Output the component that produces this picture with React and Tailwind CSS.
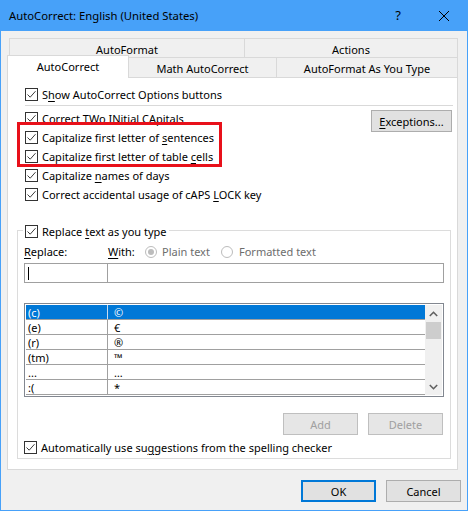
import React from "react";

// little checked box, drawn like the Win10 one
const Check = () => (
    <span className="w-[13px] h-[13px] border border-[#333333] bg-white flex items-center justify-center shrink-0">
        <svg width="11" height="11" viewBox="0 0 11 11">
            <path d="M1.5 5.5 L4.2 8.2 L9.5 2.2" fill="none" stroke="#3c3c3c" strokeWidth="1" />
        </svg>
    </span>
);

const CheckRow = ({ children }) => (
    <div className="flex items-center h-[19px] gap-[4px]">
        <Check />
        <span className="whitespace-nowrap">{children}</span>
    </div>
);

const U = ({ children }) => <span className="underline underline-offset-2">{children}</span>;

const Radio = ({ on }) => (
    <span className="w-[12px] h-[12px] rounded-full border border-[#bcbcbc] bg-white flex items-center justify-center shrink-0">
        {on && <span className="w-[6px] h-[6px] rounded-full bg-[#bcbcbc]" />}
    </span>
);

const rows = [
    ["(c)", "©"],
    ["(e)", "€"],
    ["(r)", "®"],
    ["(tm)", "™"],
    ["...", "…"],
    [":(", "*"],
];

const Button = ({ children, disabled, primary, className = "" }) => (
    <div
        className={`w-[75px] h-[22px] flex items-center justify-center ${
            primary ? "border-2 border-[#0078d7] bg-[#e1e1e1]" : disabled ? "border border-[#bfbfbf] bg-[#e6e6e6]" : "border border-[#adadad] bg-[#e1e1e1]"
        } ${disabled ? "text-[#a0a0a0]" : "text-black"} ${className}`}
    >
        {children}
    </div>
);

export default function App() {
    return (
        <div className="w-[468px] h-[511px] bg-[#f0f0f0] border-x border-b border-[#47a1f9] flex flex-col font-['Noto_Sans',sans-serif] text-[11px] text-black leading-none">
            {/* title bar */}
            <div className="h-[31px] bg-[#47a1f9] flex items-center pl-[8px] shrink-0 text-[11.3px]">
                <span className="flex-1">AutoCorrect: English (United States)</span>
                <span className="w-[20px] text-center text-[13px] mr-[30px]">?</span>
                <svg width="12" height="12" viewBox="0 0 12 12" className="mr-[17px]">
                    <path d="M1 1 L11 11 M11 1 L1 11" stroke="#000" strokeWidth="1" />
                </svg>
            </div>

            <div className="px-[6px] flex flex-col">
                {/* tabs */}
                <div className="ml-[2px] mt-[7px] flex h-[19px]">
                    <div className="w-[235px] border-t border-l border-[#d9d9d9] flex items-center justify-center pt-[2px]">AutoFormat</div>
                    <div className="w-[214px] border-t border-x border-[#d9d9d9] flex items-center justify-center pt-[2px]">Actions</div>
                </div>
                <div className="-mt-[2px] flex items-end">
                    <div className="relative z-10 w-[122px] h-[23px] -mb-px bg-white border-t border-x border-[#d9d9d9] flex items-center justify-center pb-[1px]">
                        AutoCorrect
                    </div>
                    <div className="w-[148px] h-[20px] border-t border-r border-[#d9d9d9] flex items-center justify-center pt-[1px]">Math AutoCorrect</div>
                    <div className="w-[181px] h-[20px] border-t border-r border-[#d9d9d9] flex items-center justify-center pt-[1px]">AutoFormat As You Type</div>
                </div>

                {/* panel */}
                <div className="relative w-[451px] h-[393px] bg-white border border-[#d9d9d9] pl-[17px] pr-[5px] pt-[7px] flex flex-col">
                    <CheckRow>
                        S<U>h</U>ow AutoCorrect Options buttons
                    </CheckRow>
                    <div className="h-px bg-[#d9d9d9] mt-px mr-[-1px]" />
                    <div className="flex mt-[3px]">
                        <div className="flex-1 flex flex-col">
                            <CheckRow>Correct TWo INitial CApitals</CheckRow>
                            <CheckRow>
                                Capitalize first letter of <U>s</U>entences
                            </CheckRow>
                            <CheckRow>
                                Capitalize first letter of table <U>c</U>ells
                            </CheckRow>
                            <CheckRow>
                                Capitalize <U>n</U>ames of days
                            </CheckRow>
                            <CheckRow>
                                Correct accidental usage of cAPS <U>L</U>OCK key
                            </CheckRow>
                        </div>
                        <div className="mt-px w-[81px] h-[22px] border border-[#adadad] bg-[#e1e1e1] flex items-center justify-center">
                            <span>
                                <U>E</U>xceptions...
                            </span>
                        </div>
                    </div>

                    {/* replace group */}
                    <div className="-ml-[8px] mt-[26px] w-[434px] border border-[#dcdcdc] px-[6px] pb-[1px] flex flex-col">
                        <div className="-mt-[9px] ml-[-1px] self-start bg-white px-[2px]">
                            <CheckRow>
                                Replace <U>t</U>ext as you type
                            </CheckRow>
                        </div>
                        <div className="mt-px h-[19px] flex items-center">
                            <span className="w-[84px]">
                                <U>R</U>eplace:
                            </span>
                            <span className="w-[37px]">
                                <U>W</U>ith:
                            </span>
                            <span className="w-[76px] flex items-center gap-[5px] text-[#6d6d6d]">
                                <Radio on />
                                Plain text
                            </span>
                            <span className="flex items-center gap-[6px] text-[#6d6d6d]">
                                <Radio />
                                Formatted text
                            </span>
                        </div>
                        <div className="mt-[2px] flex h-[20px]">
                            <div className="w-[84px] border border-[#a0a0a0] flex items-center pl-[3px]">
                                <span className="w-px h-[13px] bg-black" />
                            </div>
                            <div className="flex-1 -ml-px border border-[#a0a0a0]" />
                        </div>

                        {/* list */}
                        <div className="mt-[20px] h-[94px] border border-[#828790] p-px flex">
                            <div className="flex-1 flex flex-col overflow-hidden">
                                {rows.map(([a, b], i) => (
                                    <div
                                        key={a}
                                        className={`h-[15px] shrink-0 flex border-b border-[#a0a0a0] ${i === 0 ? "bg-[#0078d7] text-white" : ""}`}
                                    >
                                        <span className={`w-[82px] pl-[2px] flex items-center border-r ${i === 0 ? "border-[#c8dcf0]" : "border-[#a0a0a0]"}`}>{a}</span>
                                        <span className="pl-[6px] flex items-center">{b}</span>
                                    </div>
                                ))}
                            </div>
                            <div className="w-[17px] bg-[#f0f0f0] flex flex-col items-center">
                                <div className="h-[17px] flex items-center justify-center">
                                    <svg width="9" height="6" viewBox="0 0 9 6">
                                        <path d="M0.8 5 L4.5 1.3 L8.2 5" fill="none" stroke="#606060" strokeWidth="1.6" />
                                    </svg>
                                </div>
                                <div className="w-[15px] h-[17px] bg-[#cdcdcd]" />
                                <div className="flex-1" />
                                <div className="h-[17px] flex items-center justify-center">
                                    <svg width="9" height="6" viewBox="0 0 9 6">
                                        <path d="M0.8 1 L4.5 4.7 L8.2 1" fill="none" stroke="#606060" strokeWidth="1.6" />
                                    </svg>
                                </div>
                            </div>
                        </div>

                        <div className="mt-[16px] flex justify-end gap-[10px] mr-px">
                            <Button disabled>Add</Button>
                            <Button disabled>Delete</Button>
                        </div>
                        <div className="mt-[3px]">
                            <CheckRow>
                                Automatically use su<U>g</U>gestions from the spelling checker
                            </CheckRow>
                        </div>
                    </div>

                    {/* red highlight */}
                    <div className="absolute left-[9px] top-[44px] w-[205px] h-[45px] border-[3px] border-[#e8101a]" />
                </div>

                {/* footer */}
                <div className="mt-[10px] flex justify-end gap-[10px]">
                    <Button primary>OK</Button>
                    <Button>Cancel</Button>
                </div>
            </div>
        </div>
    );
}
